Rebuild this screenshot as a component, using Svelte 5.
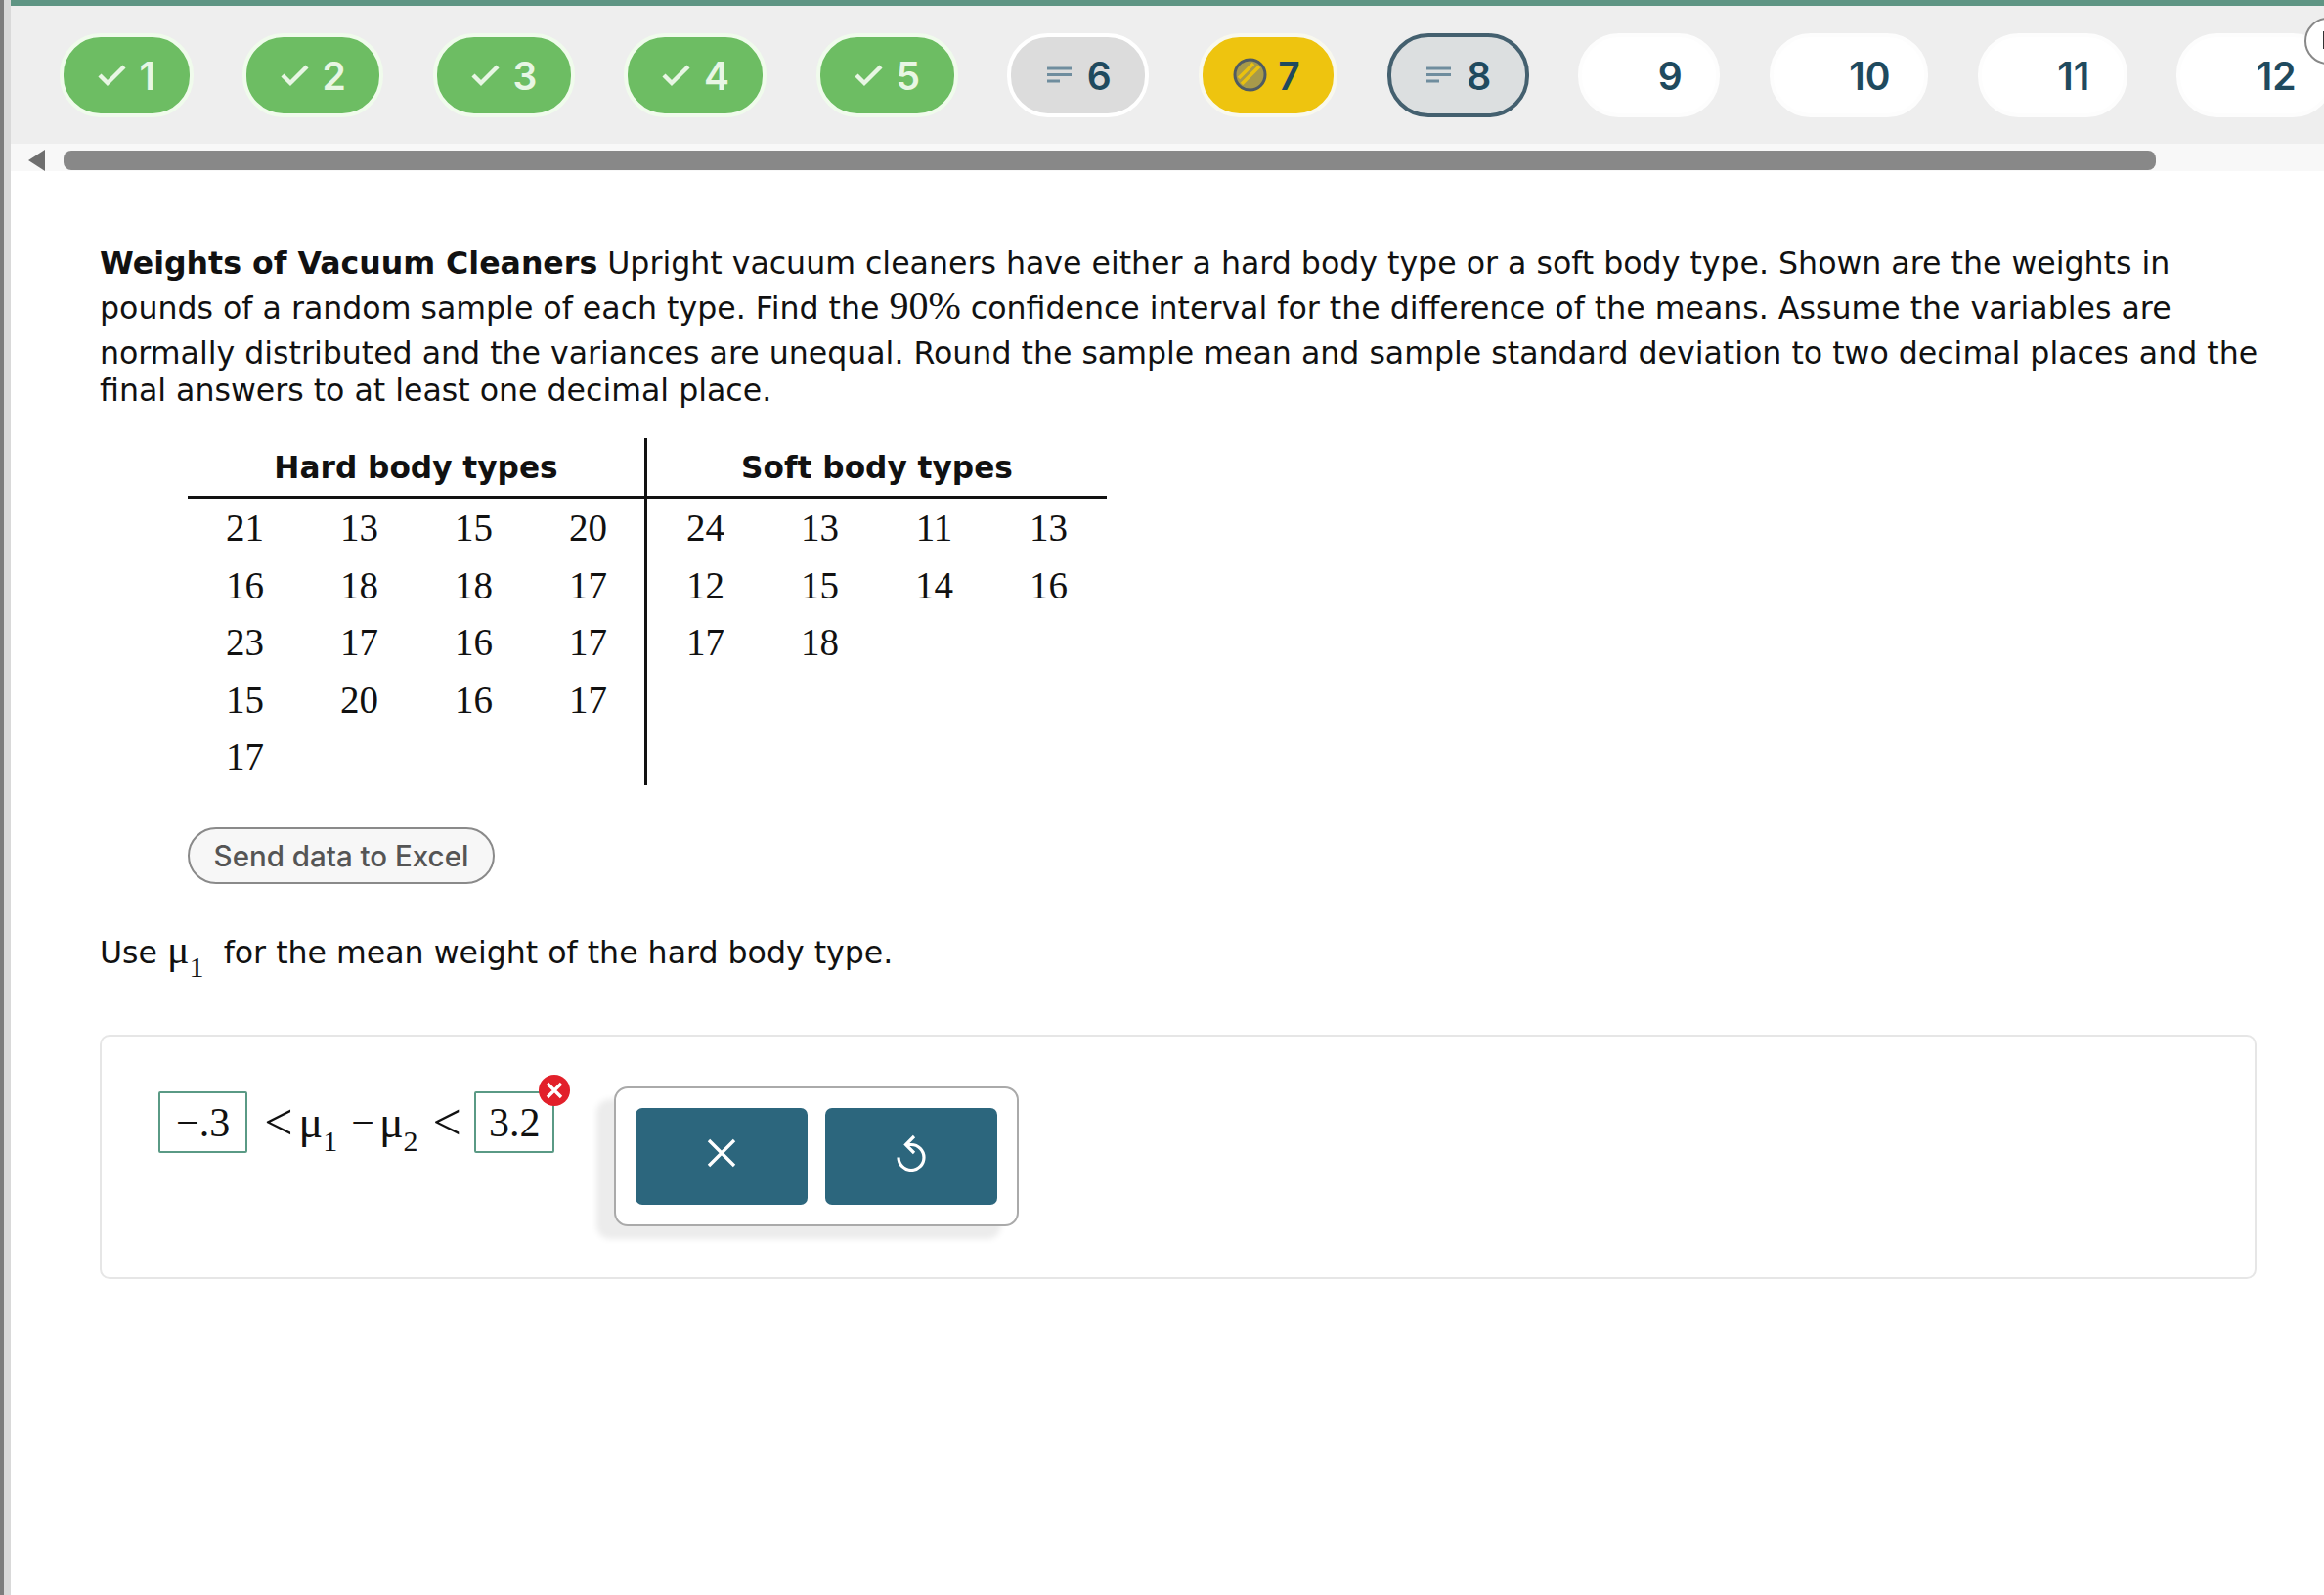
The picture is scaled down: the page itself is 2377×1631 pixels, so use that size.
<script lang="ts">
	type Pill = { n: number; kind: 'done' | 'draft' | 'flag' | 'current' | 'empty' };

	const pills: Pill[] = [
		{ n: 1, kind: 'done' },
		{ n: 2, kind: 'done' },
		{ n: 3, kind: 'done' },
		{ n: 4, kind: 'done' },
		{ n: 5, kind: 'done' },
		{ n: 6, kind: 'draft' },
		{ n: 7, kind: 'flag' },
		{ n: 8, kind: 'current' },
		{ n: 9, kind: 'empty' },
		{ n: 10, kind: 'empty' },
		{ n: 11, kind: 'empty' },
		{ n: 12, kind: 'empty' }
	];

	const hard = [21, 13, 15, 20, 16, 18, 18, 17, 23, 17, 16, 17, 15, 20, 16, 17, 17];
	const soft = [24, 13, 11, 13, 12, 15, 14, 16, 17, 18];
</script>

<div class="page">
	<div class="topline"></div>
	<nav class="pills">
		{#each pills as p}
			<div class="pill {p.kind}">
				<span class="icon">
					{#if p.kind === 'done'}
						<svg width="29" height="24" viewBox="0 0 29 24"><path d="M2 12l8 8L27 3" fill="none" stroke="currentColor" stroke-width="4.4" /></svg>
					{:else if p.kind === 'draft' || p.kind === 'current'}
						<svg width="25" height="20" viewBox="0 0 25 20" stroke="#6f8d9e" stroke-width="2.8"><path d="M0 3h25M0 9.500h25M0 16h13" /></svg>
					{:else if p.kind === 'flag'}
						<svg width="35" height="35" viewBox="0 0 35 35">
							<circle cx="17.500" cy="17.500" r="15.500" fill="#a79a4a" stroke="#4f5b62" stroke-width="3" />
							<path d="M6 21L21 6M9 27L27 9" stroke="#e9c10f" stroke-width="3.600" />
						</svg>
					{/if}
				</span>
				<span class="num">{p.n}</span>
			</div>
		{/each}
	</nav>
	<div class="round"><span></span></div>

	<div class="scrollbar">
		<span class="arrow"></span>
		<div class="thumb"></div>
	</div>

	<main>
		<p class="question">
			<span class="l1"><b>Weights of Vacuum Cleaners</b> Upright vacuum cleaners have either a hard body type or a soft body type. Shown are the weights in</span>
			<span class="l2">pounds of a random sample of each type. Find the <i class="m">90%</i> confidence interval for the difference of the means. Assume the variables are</span>
			<span class="l3">normally distributed and the variances are unequal. Round the sample mean and sample standard deviation to two decimal places and the</span>
			<span class="l4">final answers to at least one decimal place.</span>
		</p>

		<div class="data">
			<div class="half">
				<div class="head">Hard body types</div>
				<div class="cells">
					{#each hard as v}<span>{v}</span>{/each}
				</div>
			</div>
			<div class="half right">
				<div class="head">Soft body types</div>
				<div class="cells">
					{#each soft as v}<span>{v}</span>{/each}
				</div>
			</div>
		</div>

		<button class="excel">Send data to Excel</button>

		<p class="use">Use <span class="m mu">μ<sub>1</sub></span> for the mean weight of the hard body type.</p>

		<section class="answer">
			<div class="expr">
				<span class="box">−.3</span>
				<span class="op first">&lt;</span>
				<span class="mu">μ<sub>1</sub></span>
				<span class="minus">−</span>
				<span class="mu">μ<sub>2</sub></span>
				<span class="op second">&lt;</span>
				<span class="box wrong">3.2<i class="bad">
					<svg width="20" height="20" viewBox="0 0 20 20"><path d="M3 3l14 14M17 3L3 17" stroke="#fff" stroke-width="3.400" /></svg>
				</i></span>
			</div>
			<div class="tools">
				<button aria-label="clear">
					<svg class="x" width="30" height="30" viewBox="0 0 30 30"><path d="M2 2l26 26M28 2L2 28" fill="none" stroke="#fff" stroke-width="3.400" /></svg>
				</button>
				<button aria-label="undo">
					<svg class="undo" width="32" height="38" viewBox="0 0 32 38" fill="none" stroke="#fff" stroke-width="3.200"><path d="M11 10.500h5A13 13 0 1 1 3 23.500" /><path d="M19 2l-8.500 8.500L19 19" /></svg>
				</button>
			</div>
		</section>
	</main>
</div>

<style>
	:global(body) {
		margin: 0;
		background: #fff;
	}

	.page {
		position: relative;
		width: 2377px;
		height: 1631px;
		overflow: hidden;
		box-sizing: border-box;
		padding-left: 11px;
		background: linear-gradient(90deg, #7d7d7d 4px, #d9d9d9 4px, #d9d9d9 11px, #fff 11px);
		font-family: 'DejaVu Sans', Verdana, sans-serif;
		color: #111;
	}

	.topline {
		height: 6px;
		background: #5f9584;
	}

	.pills {
		display: flex;
		align-items: center;
		gap: 50.600px;
		height: 141px;
		padding-left: 50px;
		background: #eeeeee;
		overflow: hidden;
	}

	.pill {
		flex: none;
		display: flex;
		align-items: center;
		justify-content: center;
		gap: 14px;
		height: 86px;
		padding: 0 34.500px;
		box-sizing: border-box;
		border: 4px solid #fff;
		border-radius: 42px;
		font-family: Inter, sans-serif;
		font-weight: 600;
		font-size: 39px;
		color: #1f4a5e;
	}

	.num {
		position: relative;
		top: 1px;
	}

	.icon {
		display: flex;
		align-items: center;
		justify-content: center;
		width: 29px;
		height: 35px;
	}

	.icon svg {
		flex: none;
	}

	.done {
		background: #6dbd63;
		color: #e8f6e4;
		border-color: #f0fbec;
	}

	.draft {
		background: #dcdcdc;
	}

	.flag {
		background: #eec40f;
		border-color: #f8f8ee;
	}

	.current {
		background: #dcdfe0;
		border-color: #44606f;
	}

	.empty {
		background: #fff;
		border-color: #fdfdfd;
	}

	.round {
		position: absolute;
		left: 2357px;
		top: 18px;
		width: 48px;
		height: 48px;
		box-sizing: border-box;
		border: 2px solid #888;
		border-radius: 50%;
		background: #fff;
	}

	.round span {
		position: absolute;
		left: 17px;
		top: 12px;
		width: 4px;
		height: 18px;
		background: #333;
	}

	.scrollbar {
		position: relative;
		height: 28px;
		background: #f8f8f8;
		display: flex;
		align-items: center;
	}

	.arrow {
		position: absolute;
		left: 18px;
		top: 6px;
		border-style: solid;
		border-width: 11px 17px 11px 0;
		border-color: transparent #6f6f6f transparent transparent;
	}

	.thumb {
		width: 2140px;
		height: 20px;
		margin: 6px 0 0 54px;
		background: #888;
		border-radius: 8px;
	}

	main {
		padding-left: 91px;
		width: 2210px;
	}

	.question {
		margin: 71px 0 0;
		font-size: 31.600px;
		white-space: nowrap;
	}

	.question span {
		display: block;
	}

	.l1,
	.l2,
	.l3 {
		line-height: 46px;
	}

	.l4 {
		line-height: 30px;
	}

	.m {
		font-family: 'Liberation Serif', serif;
		font-style: normal;
		font-size: 40px;
		line-height: 0;
	}

	.data {
		display: flex;
		margin: 34px 0 0 90px;
		width: 940px;
		height: 355px;
	}

	.half {
		width: 470px;
		box-sizing: border-box;
		border-right: 3px solid #111;
	}

	.half.right {
		border-right: 0;
	}

	.head {
		height: 62px;
		line-height: 60px;
		box-sizing: border-box;
		border-bottom: 3px solid #111;
		text-align: center;
		font-weight: 700;
		font-size: 31.200px;
	}

	.cells {
		display: grid;
		grid-template-columns: repeat(4, 117px);
		grid-auto-rows: 58.500px;
		padding-top: 1px;
		font-family: 'Liberation Serif', serif;
		font-size: 39px;
		text-align: center;
		line-height: 58px;
	}

	.right .cells {
		padding-left: 1px;
	}

	.excel {
		display: block;
		margin: 42.500px 0 0 90px;
		height: 58px;
		width: 314px;
		padding: 0;
		background: #f7f7f7;
		border: 2px solid #8a8a8a;
		border-radius: 29px;
		font-family: Inter, sans-serif;
		font-weight: 500;
		font-size: 29.500px;
		color: #555;
	}

	.use {
		margin: 47px 0 0;
		font-size: 31.600px;
		line-height: 46px;
	}

	.mu {
		font-family: 'Liberation Serif', serif;
		font-size: 46px;
		line-height: 1;
	}

	.use .mu {
		font-size: 42px;
		margin-right: 10px;
		line-height: 0;
	}

	.mu sub {
		font-size: 30px;
		line-height: 0;
		vertical-align: -14px;
	}

	.answer {
		display: flex;
		align-items: flex-start;
		height: 250px;
		width: 2206px;
		margin-top: 61.500px;
		box-sizing: border-box;
		border: 2px solid #e6e6e6;
		border-radius: 10px;
	}

	.expr {
		display: flex;
		align-items: center;
		margin: 56px 0 0 58px;
		font-family: 'Liberation Serif', serif;
		font-size: 42px;
		color: #111;
	}

	.box {
		position: relative;
		display: flex;
		align-items: center;
		justify-content: center;
		height: 63px;
		padding: 0 16px;
		box-sizing: border-box;
		border: 2.500px solid #5a9a85;
		border-radius: 2px;
	}

	.box.wrong {
		padding: 0 13px;
	}

	.op {
		font-size: 52px;
		line-height: 1;
	}

	.op.first {
		margin: 0 6px 0 17px;
	}

	.op.second {
		margin: 0 13px 0 15px;
	}

	.minus {
		margin: 0 5px 0 14px;
	}

	.bad {
		position: absolute;
		top: -19px;
		right: -18px;
		width: 32px;
		height: 32px;
		display: flex;
		align-items: center;
		justify-content: center;
		border-radius: 50%;
		background: #e2202a;
	}

	.tools {
		display: flex;
		gap: 18px;
		margin: 51px 0 0 61px;
		padding: 20px;
		background: #fff;
		border: 2px solid #aaa;
		border-radius: 14px;
		box-shadow: -18px 13px 6px #ececec;
	}

	.tools button {
		display: flex;
		align-items: center;
		justify-content: center;
		width: 176px;
		height: 99px;
		padding: 0;
		background: #2c667d;
		border: 0;
		border-radius: 7px;
	}

	.x {
		margin-bottom: 8px;
	}

	.undo {
		margin-bottom: 8px;
	}
</style>
